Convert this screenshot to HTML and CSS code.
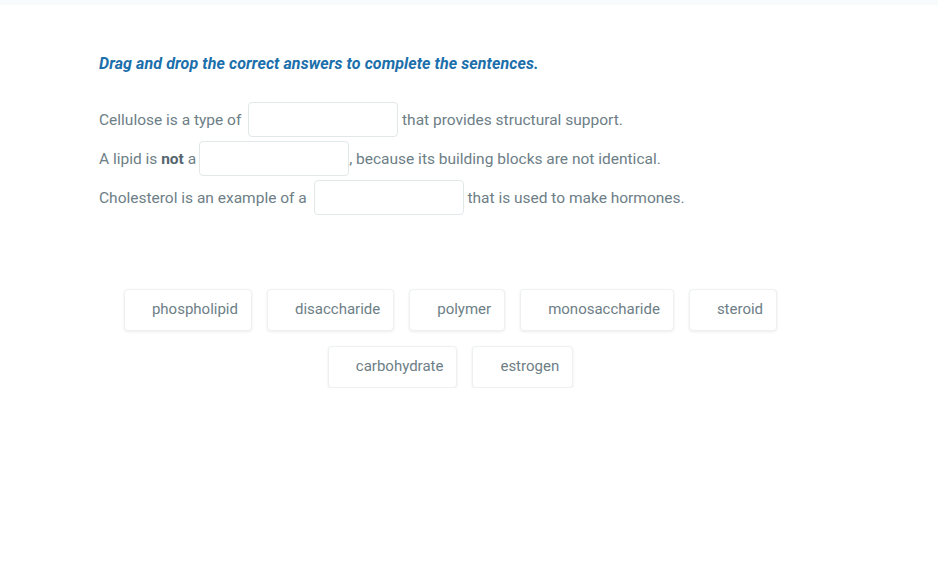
FILE: index.html
```html
<!DOCTYPE html>
<html lang="en">
<head>
<meta charset="utf-8">
<title>Drag and drop</title>
<link rel="stylesheet" href="styles.css">
</head>
<body>
<div class="topbar"></div>
<main class="activity">
  <h1 class="prompt">Drag and drop the correct answers to complete the sentences.</h1>
  <div class="sentences">
    <p class="sentence">Cellulose is a type of <span class="drop"></span> that provides structural support.</p>
    <p class="sentence">A lipid is <b>not</b> a<span class="drop"></span>, because its building blocks are not identical.</p>
    <p class="sentence">Cholesterol is an example of a <span class="drop"></span> that is used to make hormones.</p>
  </div>
  <div class="bank">
    <div class="chip">phospholipid</div>
    <div class="chip">disaccharide</div>
    <div class="chip">polymer</div>
    <div class="chip">monosaccharide</div>
    <div class="chip">steroid</div>
    <div class="chip">carbohydrate</div>
    <div class="chip">estrogen</div>
  </div>
</main>
</body>
</html>
```
FILE: styles.css
```css
html, body {
  margin: 0;
  padding: 0;
  background: #ffffff;
}
body {
  font-family: Roboto, "Liberation Sans", sans-serif;
  color: #6d7e86;
}
.topbar {
  height: 5px;
  background: #f8fbfb;
}
.activity {
  padding: 49px 0 0 99px;
  width: 703px;
}
.prompt {
  margin: 0;
  font-size: 16px;
  line-height: 20px;
  font-weight: 700;
  font-style: italic;
  letter-spacing: 0.1px;
  color: #1b6fab;
}
.sentences {
  margin-top: 28px;
  display: flex;
  flex-direction: column;
  gap: 4px;
}
.sentence {
  margin: 0;
  font-size: 15.5px;
  line-height: 37px;
  height: 35px;
  white-space: nowrap;
}
.sentence b {
  color: #56666e;
}
.drop {
  display: inline-block;
  vertical-align: top;
  box-sizing: border-box;
  width: 150px;
  height: 35px;
  margin-left: 3px;
  border: 1px solid #e2e7e9;
  border-radius: 4px;
  background: #fff;
}
.bank {
  margin-top: 74px;
  display: flex;
  flex-wrap: wrap;
  justify-content: center;
  gap: 15px;
}
.chip {
  box-sizing: border-box;
  height: 42px;
  line-height: 39px;
  padding: 0 13px 0 27px;
  font-size: 15px;
  border: 1px solid #eef1f2;
  border-radius: 4px;
  background: #fff;
  box-shadow: 0 1px 3px rgba(0, 0, 0, 0.08);
  color: #6d7e86;
}
```
